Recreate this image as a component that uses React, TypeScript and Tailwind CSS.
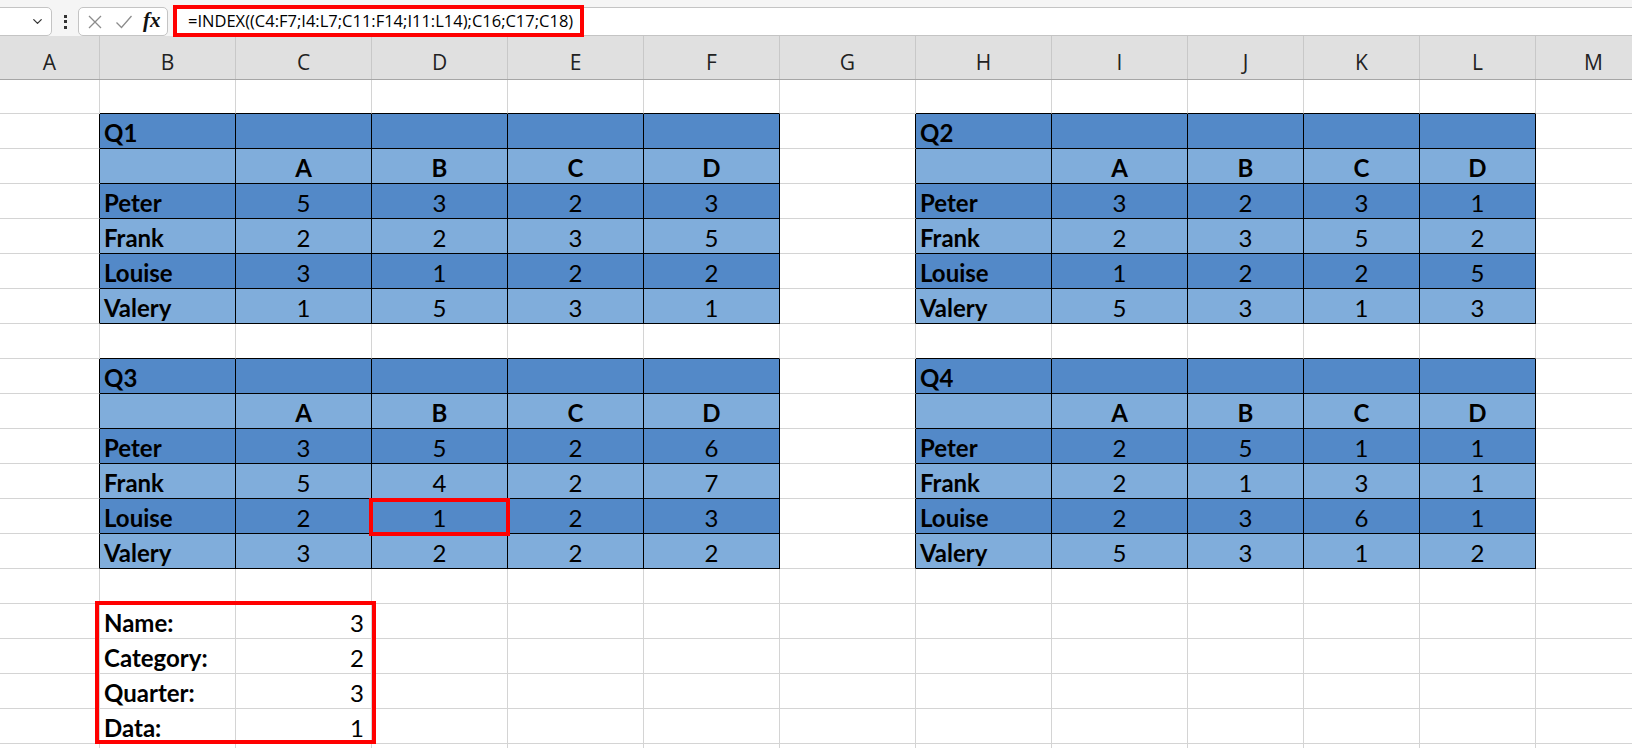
import React from "react";
import { ChevronDown } from "lucide-react";

const COLS = ["A", "B", "C", "D", "E", "F", "G", "H", "I", "J", "K", "L", "M"];

type Table = { r: number; c: number; title: string; data: [string, number[]][] };

const TABLES: Table[] = [
  {
    r: 2,
    c: 1,
    title: "Q1",
    data: [
      ["Peter", [5, 3, 2, 3]],
      ["Frank", [2, 2, 3, 5]],
      ["Louise", [3, 1, 2, 2]],
      ["Valery", [1, 5, 3, 1]],
    ],
  },
  {
    r: 2,
    c: 7,
    title: "Q2",
    data: [
      ["Peter", [3, 2, 3, 1]],
      ["Frank", [2, 3, 5, 2]],
      ["Louise", [1, 2, 2, 5]],
      ["Valery", [5, 3, 1, 3]],
    ],
  },
  {
    r: 9,
    c: 1,
    title: "Q3",
    data: [
      ["Peter", [3, 5, 2, 6]],
      ["Frank", [5, 4, 2, 7]],
      ["Louise", [2, 1, 2, 3]],
      ["Valery", [3, 2, 2, 2]],
    ],
  },
  {
    r: 9,
    c: 7,
    title: "Q4",
    data: [
      ["Peter", [2, 5, 1, 1]],
      ["Frank", [2, 1, 3, 1]],
      ["Louise", [2, 3, 6, 1]],
      ["Valery", [5, 3, 1, 2]],
    ],
  },
];

const SUMMARY: [string, number][] = [
  ["Name:", 3],
  ["Category:", 2],
  ["Quarter:", 3],
  ["Data:", 1],
];

function findTable(r: number, c: number) {
  return TABLES.find((t) => r >= t.r && r <= t.r + 5 && c >= t.c && c <= t.c + 4);
}

type CellInfo = { text: string; align: "left" | "center" | "right"; bold: boolean };

function cellContent(r: number, c: number): CellInfo | null {
  const t = findTable(r, c);
  if (t) {
    const dr = r - t.r;
    const dc = c - t.c;
    if (dr === 0) return dc === 0 ? { text: t.title, align: "left", bold: true } : null;
    if (dr === 1) return dc === 0 ? null : { text: "ABCD"[dc - 1], align: "center", bold: true };
    const row = t.data[dr - 2];
    if (dc === 0) return { text: row[0], align: "left", bold: true };
    return { text: String(row[1][dc - 1]), align: "center", bold: false };
  }
  if (r >= 16 && r <= 19) {
    const s = SUMMARY[r - 16];
    if (c === 1) return { text: s[0], align: "left", bold: true };
    if (c === 2) return { text: String(s[1]), align: "right", bold: false };
  }
  return null;
}

function Cell({ r, c }: { r: number; c: number }) {
  const t = findTable(r, c);
  const rightBlack = !!t || !!findTable(r, c + 1);
  const bottomBlack = !!t || !!findTable(r + 1, c);
  let bg = "bg-white";
  if (t) {
    const dr = r - t.r;
    bg = dr % 2 === 0 ? "bg-[#5389c8]" : "bg-[#80addb]";
  }
  const info = cellContent(r, c);
  const align =
    info?.align === "center" ? "justify-center" : info?.align === "right" ? "justify-end pr-[7px]" : "justify-start pl-[4px]";
  return (
    <div
      className={`flex items-center overflow-visible whitespace-nowrap border-r border-b ${
        rightBlack ? "border-r-black" : "border-r-[#d4d4d4]"
      } ${bottomBlack ? "border-b-black" : "border-b-[#d4d4d4]"} ${bg} ${align}`}
    >
      {info && (
        <span
          className={`text-[24px] leading-none pt-[3px] text-black ${info.bold ? "font-bold" : "font-normal"}`}
          style={{ fontFamily: "Lato, 'Liberation Sans', sans-serif" }}
        >
          {info.text}
        </span>
      )}
    </div>
  );
}

const GRID = "grid grid-cols-[100px_136px_136px_136px_136px_136px_136px_136px_136px_116px_116px_116px_116px]";

export default function App() {
  const rows = Array.from({ length: 20 }, (_, i) => i + 1);
  return (
    <div className="relative w-[1632px] h-[748px] overflow-hidden bg-white">
      {/* toolbar */}
      <div className="flex h-[36px] pt-[7px] bg-[#f5f5f5]">
        <div className="ml-[-12px] w-[64px] h-[29px] bg-white border border-[#c4c4c4] rounded-[5px] flex items-center justify-end pr-[6px]">
          <ChevronDown size={15} strokeWidth={2} className="text-[#333]" />
        </div>
        <div className="w-[26px] h-[29px] flex flex-col items-center justify-center gap-[2.5px]">
          <div className="w-[3px] h-[3px] bg-[#333]" />
          <div className="w-[3px] h-[3px] bg-[#333]" />
          <div className="w-[3px] h-[3px] bg-[#333]" />
        </div>
        <div className="w-[90px] h-[29px] bg-white border border-[#c4c4c4] rounded-[5px] flex items-center">
          <svg width="16" height="16" viewBox="0 0 16 16" className="ml-[8px]">
            <path d="M2 2 L14 14 M14 2 L2 14" stroke="#8c8c8c" strokeWidth="1.3" fill="none" />
          </svg>
          <svg width="18" height="16" viewBox="0 0 18 16" className="ml-[12px]">
            <path d="M1.5 8.5 L6.5 13.5 L16.5 2" stroke="#8c8c8c" strokeWidth="1.3" fill="none" />
          </svg>
          <span
            className="ml-[10px] text-[21px] italic font-bold leading-none text-[#111] pb-[2px]"
            style={{ fontFamily: "'Liberation Serif', serif" }}
          >
            fx
          </span>
        </div>
        <div className="ml-[5px] flex-1 h-[29px] bg-white border-t border-b border-l border-[#c4c4c4] flex items-center pl-[14px]">
          <span
            className="text-[16.5px] text-black leading-none"
            style={{ fontFamily: "'Open Sans', 'Noto Sans', sans-serif" }}
          >
            =INDEX((C4:F7;I4:L7;C11:F14;I11:L14);C16;C17;C18)
          </span>
        </div>
      </div>

      {/* column headers */}
      <div className={`${GRID} h-[44px] bg-[#e0e0e0] border-b border-b-[#a6a6a6]`}>
        {COLS.map((l) => (
          <div
            key={l}
            className="flex items-center justify-center border-r border-r-[#c8c8c8] pt-[10px] text-[21px] text-[#222]"
            style={{ fontFamily: "'Open Sans', 'Noto Sans', sans-serif" }}
          >
            {l}
          </div>
        ))}
      </div>

      {/* rows */}
      {rows.map((r) => (
        <div key={r} className={`${GRID} ${r === 1 ? "h-[34px]" : "h-[35px]"}`}>
          {COLS.map((_, c) => (
            <Cell key={c} r={r} c={c} />
          ))}
        </div>
      ))}

      {/* red highlight boxes */}
      <div className="absolute left-[173px] top-[5px] w-[411px] h-[32px] border-[4px] border-[#ff0000] pointer-events-none" />
      <div className="absolute left-[369px] top-[498px] w-[141px] h-[38px] border-[4px] border-[#ff0000] pointer-events-none" />
      <div className="absolute left-[95px] top-[601px] w-[281px] h-[143px] border-[4px] border-[#ff0000] pointer-events-none" />
    </div>
  );
}
